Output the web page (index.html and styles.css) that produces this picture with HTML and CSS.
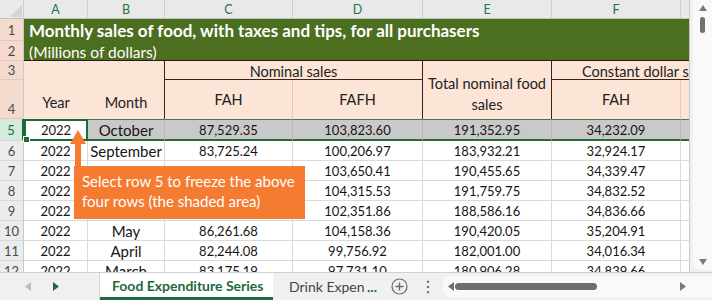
FILE: index.html
```html
<!DOCTYPE html>
<html lang="en">

<head>
    <meta charset="UTF-8">
    <title>Food Expenditure Series</title>
    <link rel="stylesheet" href="styles.css">
</head>

<body>
    <div class="app">
        <div class="main">
            <div class="sheet">
                <!-- column headers -->
                <div class="corner">
                    <svg width="24" height="19" viewBox="0 0 24 19"><polygon points="22,5 22,17 10,17" fill="#d4d4d4"/></svg>
                </div>
                <div class="colhead">A</div>
                <div class="colhead">B</div>
                <div class="colhead">C</div>
                <div class="colhead">D</div>
                <div class="colhead">E</div>
                <div class="colhead">F</div>
                <div class="colhead"></div>

                <!-- rows 1-2: title -->
                <div class="rowhead shaded">1</div>
                <div class="title">
                    <div class="title-main">Monthly sales of food, with taxes and tips, for all purchasers</div>
                    <div class="title-sub">(Millions of dollars)</div>
                </div>
                <div class="rowhead shaded">2</div>

                <!-- rows 3-4: table header -->
                <div class="rowhead shaded">3</div>
                <div class="hd tall year">Year</div>
                <div class="hd tall month">Month</div>
                <div class="hd nominal">Nominal sales</div>
                <div class="hd total">Total nominal food sales</div>
                <div class="hd constant">Constant dollar sa</div>
                <div class="rowhead shaded bottom">4</div>
                <div class="hd sub">FAH</div>
                <div class="hd sub dark">FAFH</div>
                <div class="hd sub">FAH</div>
                <div class="hd"></div>

                <!-- row 5: frozen line + selection -->
                <div class="rowhead picked">5</div>
                <div class="c num sel-row active">2022</div>
                <div class="c sel-row">October</div>
                <div class="c sel-row num">87,529.35</div>
                <div class="c sel-row num">103,823.60</div>
                <div class="c sel-row num">191,352.95</div>
                <div class="c sel-row num">34,232.09</div>
                <div class="c sel-row"></div>

                <div class="rowhead">6</div>
                <div class="c num">2022</div>
                <div class="c">September</div>
                <div class="c num">83,725.24</div>
                <div class="c num">100,206.97</div>
                <div class="c num">183,932.21</div>
                <div class="c num">32,924.17</div>
                <div class="c"></div>

                <!-- rows 7-9: B and C sit under the note -->
                <div class="rowhead">7</div>
                <div class="c num">2022</div>
                <div class="c"></div>
                <div class="c num"></div>
                <div class="c num">103,650.41</div>
                <div class="c num">190,455.65</div>
                <div class="c num">34,339.47</div>
                <div class="c"></div>

                <div class="rowhead">8</div>
                <div class="c num">2022</div>
                <div class="c"></div>
                <div class="c num"></div>
                <div class="c num">104,315.53</div>
                <div class="c num">191,759.75</div>
                <div class="c num">34,832.52</div>
                <div class="c"></div>

                <div class="rowhead">9</div>
                <div class="c num">2022</div>
                <div class="c"></div>
                <div class="c num"></div>
                <div class="c num">102,351.86</div>
                <div class="c num">188,586.16</div>
                <div class="c num">34,836.66</div>
                <div class="c"></div>

                <div class="rowhead">10</div>
                <div class="c num">2022</div>
                <div class="c">May</div>
                <div class="c num">86,261.68</div>
                <div class="c num">104,158.36</div>
                <div class="c num">190,420.05</div>
                <div class="c num">35,204.91</div>
                <div class="c"></div>

                <div class="rowhead">11</div>
                <div class="c num">2022</div>
                <div class="c">April</div>
                <div class="c num">82,244.08</div>
                <div class="c num">99,756.92</div>
                <div class="c num">182,001.00</div>
                <div class="c num">34,016.34</div>
                <div class="c"></div>

                <div class="rowhead">12</div>
                <div class="c num">2022</div>
                <div class="c">March</div>
                <div class="c num">83,175.19</div>
                <div class="c num">97,731.10</div>
                <div class="c num">180,906.28</div>
                <div class="c num">34,839.66</div>
                <div class="c"></div>

                <!-- callout over the sheet -->
                <svg class="arrow" width="20" height="38" viewBox="0 0 20 38">
                    <polygon points="10,0 18,14 13,14 13,38 7,38 7,14 2,14" fill="#f47b30"/>
                </svg>
                <div class="callout">Select row 5 to freeze the above<br>four rows (the shaded area)</div>
            </div>

            <div class="vscroll">
                <div class="vtrack">
                    <svg width="8" height="6" viewBox="0 0 8 6"><polygon points="4,0 8,6 0,6" fill="#7a7a7a"/></svg>
                    <div class="vthumb"></div>
                    <div class="spacer"></div>
                    <svg width="8" height="6" viewBox="0 0 8 6"><polygon points="0,0 8,0 4,6" fill="#7a7a7a"/></svg>
                </div>
            </div>
        </div>

        <div class="tabbar">
            <div class="nav">
                <svg width="6" height="9" viewBox="0 0 6 9"><polygon points="6,0 6,9 0,4.5" fill="#bdbdbd"/></svg>
                <svg width="6" height="9" viewBox="0 0 6 9"><polygon points="0,0 6,4.5 0,9" fill="#1d6b3c"/></svg>
            </div>
            <div class="tab active">Food Expenditure Series</div>
            <div class="tab other">Drink Expen</div>
            <div class="more">...</div>
            <div class="add">
                <svg width="17" height="17" viewBox="0 0 17 17">
                    <circle cx="8.5" cy="8.5" r="7.5" fill="none" stroke="#6b6b6b" stroke-width="1.2"/>
                    <path d="M8.5 4.5v8M4.5 8.5h8" stroke="#6b6b6b" stroke-width="1.4"/>
                </svg>
            </div>
            <div class="vdots">⋮</div>
            <div class="hscroll">
                <svg width="6" height="9" viewBox="0 0 6 9"><polygon points="6,0 6,9 0,4.5" fill="#6e6e6e"/></svg>
                <div class="hthumb"></div>
                <div class="spacer"></div>
                <svg width="6" height="9" viewBox="0 0 6 9"><polygon points="0,0 6,4.5 0,9" fill="#7a7a7a"/></svg>
            </div>
        </div>
    </div>
</body>

</html>
```

FILE: styles.css
```css
body {
    margin: 0;
    font-family: "Lato", "Liberation Sans", sans-serif;
    background-color: #fff;
}

.app {
    width: 712px;
    height: 300px;
    display: flex;
    flex-direction: column;
    overflow: hidden;
    background-color: #eef1f0;
}

.main {
    display: flex;
    height: 272px;
}

/* worksheet grid */
.sheet {
    position: relative;
    width: 690px;
    display: grid;
    grid-template-columns: 24px 64px 77px 128px 130px 129px 129px 9px;
    grid-template-rows: 19px 22px 20px 19px 39px 22px repeat(7, 20px);
    overflow: hidden;
    background-color: #fff;
    border-right: 1px solid #c9c9c9;
}

.sheet > div {
    box-sizing: border-box;
    min-width: 0;
}

.corner {
    background-color: #e9e9e9;
    border-right: 1px solid #cfcfcf;
    border-bottom: 1px solid #b9c7bd;
}

.corner svg {
    display: block;
}

.colhead {
    background-color: #e9e9e9;
    color: #21744a;
    font-size: 12.5px;
    display: flex;
    align-items: center;
    justify-content: center;
    border-right: 1px solid #cfcfcf;
    border-bottom: 1px solid #b9c7bd;
}

.rowhead {
    background-color: #ececec;
    color: #4a4a4a;
    font-size: 13px;
    display: flex;
    align-items: center;
    justify-content: center;
    border-right: 1px solid #c9c9c9;
    border-bottom: 1px solid #d8d8d8;
}

.rowhead.shaded {
    background-color: #f5dace;
    border-bottom-color: #e8c7b8;
}

.rowhead.bottom {
    align-items: flex-end;
    padding-bottom: 1px;
}

.rowhead.picked {
    background-color: #d3ebdb;
    color: #1d6b3c;
    border-right: 2px solid #1d6b3c;
}

.title {
    grid-column: 2 / span 7;
    grid-row: span 2;
    background-color: #4b6e1f;
    color: #fff;
    padding-left: 5px;
    border-bottom: 1px solid #2b1a10;
    white-space: nowrap;
}

.title-main {
    font-size: 17px;
    font-weight: bold;
    line-height: 24px;
}

.title-sub {
    font-size: 15.5px;
    line-height: 18px;
}

/* peach table header */
.hd {
    background-color: #fce4d6;
    color: #222;
    font-size: 14.5px;
    display: flex;
    align-items: center;
    justify-content: center;
    white-space: nowrap;
}

.hd.tall {
    grid-row: span 2;
    align-items: flex-end;
    padding-bottom: 8px;
}

.hd.month {
    border-right: 1px solid #3a2417;
}

.hd.nominal {
    grid-column: span 2;
    border-right: 1px solid #3a2417;
    border-bottom: 1px solid #3a2417;
    padding-top: 2px;
}

.hd.total {
    grid-row: span 2;
    white-space: normal;
    text-align: center;
    line-height: 21px;
    padding: 8px 4px 0;
    border-right: 1px solid #3a2417;
}

.hd.constant {
    grid-column: span 2;
    justify-content: flex-start;
    padding-left: 30px;
    padding-top: 2px;
    border-bottom: 1px solid #3a2417;
    overflow: hidden;
}

.hd.sub {
    border-right: 1px solid #f0c6b3;
}

.hd.sub.dark {
    border-right-color: #3a2417;
}

/* body cells */
.c {
    color: #151515;
    font-size: 15px;
    display: flex;
    align-items: center;
    justify-content: center;
    white-space: nowrap;
    border-right: 1px solid #dadada;
    border-bottom: 1px solid #dadada;
}

.c.num {
    font-size: 13px;
}

.c.sel-row {
    background-color: #c9c9c9;
    border-top: 1px solid #3f7b4b;
    border-bottom: 2px solid #2a6b3a;
    border-right-color: #b8b8b8;
}

.c.sel-row.active {
    position: relative;
    background-color: #fff;
    border: 2px solid #1d6b3c;
}

.c.sel-row.active::after {
    content: "";
    position: absolute;
    left: -3px;
    bottom: -4px;
    width: 5px;
    height: 5px;
    background-color: #1d6b3c;
    border: 1px solid #fff;
}

/* orange note */
.arrow {
    position: absolute;
    left: 68px;
    top: 130px;
}

.callout {
    position: absolute;
    left: 74px;
    top: 166px;
    width: 231px;
    height: 53px;
    box-sizing: border-box;
    padding: 5px 0 0 8px;
    background-color: #f47b30;
    color: #fff;
    font-size: 15px;
    line-height: 20px;
}

/* vertical scrollbar */
.vscroll {
    width: 22px;
    display: flex;
}

.vtrack {
    flex: 1;
    margin-left: 3px;
    margin-bottom: 2px;
    background-color: #f9f9f9;
    border-bottom-left-radius: 8px;
    display: flex;
    flex-direction: column;
    align-items: center;
    padding: 5px 0 5px;
}

.vthumb {
    width: 5px;
    height: 16px;
    margin-top: 6px;
    border-radius: 3px;
    background-color: #707070;
}

.spacer {
    flex: 1;
}

/* sheet tabs */
.tabbar {
    height: 28px;
    display: flex;
    align-items: stretch;
    border-top: 1px solid #d0d0d0;
    box-sizing: border-box;
    background-color: #f0f0f0;
}

.nav {
    width: 100px;
    display: flex;
    align-items: center;
    gap: 22px;
    padding-left: 25px;
    box-sizing: border-box;
    border-right: 1px solid #d6d6d6;
}

.tab {
    display: flex;
    align-items: center;
    font-size: 14px;
    white-space: nowrap;
    box-sizing: border-box;
}

.tab.active {
    width: 173px;
    padding-left: 12px;
    background-color: #fff;
    color: #1d6b3c;
    font-weight: bold;
    border-bottom: 3px solid #1d6b3c;
}

.tab.other {
    width: 85px;
    padding-left: 16px;
    color: #444;
}

.more {
    width: 28px;
    display: flex;
    align-items: center;
    justify-content: center;
    color: #1d6b3c;
    font-weight: bold;
    font-size: 14px;
}

.add {
    width: 27px;
    display: flex;
    align-items: center;
    justify-content: center;
}

.vdots {
    width: 30px;
    display: flex;
    align-items: center;
    justify-content: center;
    color: #555;
    font-size: 16px;
    font-family: "DejaVu Sans", sans-serif;
}

.hscroll {
    flex: 1;
    display: flex;
    align-items: center;
    margin: 3px 0 3px 0;
    padding: 0 26px 0 5px;
    background-color: #f9f9f9;
    border-radius: 8px 0 0 8px;
}

.hthumb {
    width: 142px;
    height: 7px;
    margin-left: 1px;
    border-radius: 4px;
    background-color: #6e6e6e;
}
```
